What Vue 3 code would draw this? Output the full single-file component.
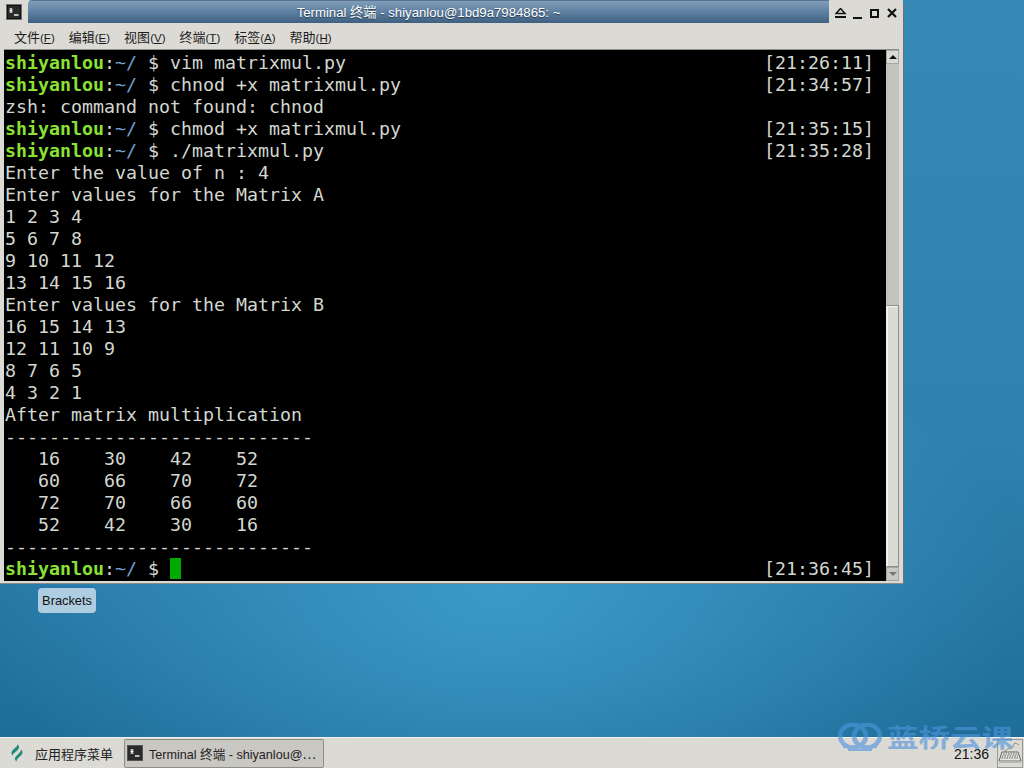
<script setup>
const prompt = { user: 'shiyanlou', sep: ':', path: '~/' }
const lines = [
  { p: true, t: 'vim matrixmul.py', time: '[21:26:11]' },
  { p: true, t: 'chnod +x matrixmul.py', time: '[21:34:57]' },
  { t: 'zsh: command not found: chnod' },
  { p: true, t: 'chmod +x matrixmul.py', time: '[21:35:15]' },
  { p: true, t: './matrixmul.py', time: '[21:35:28]' },
  { t: 'Enter the value of n : 4' },
  { t: 'Enter values for the Matrix A' },
  { t: '1 2 3 4' },
  { t: '5 6 7 8' },
  { t: '9 10 11 12' },
  { t: '13 14 15 16' },
  { t: 'Enter values for the Matrix B' },
  { t: '16 15 14 13' },
  { t: '12 11 10 9' },
  { t: '8 7 6 5' },
  { t: '4 3 2 1' },
  { t: 'After matrix multiplication' },
  { t: '----------------------------' },
  { t: '   16    30    42    52' },
  { t: '   60    66    70    72' },
  { t: '   72    70    66    60' },
  { t: '   52    42    30    16' },
  { t: '----------------------------' },
  { p: true, t: '', cursor: true, time: '[21:36:45]' }
]
const menus = [
  ['文件', '(', 'F', ')'], ['编辑', '(', 'E', ')'], ['视图', '(', 'V', ')'],
  ['终端', '(', 'T', ')'], ['标签', '(', 'A', ')'], ['帮助', '(', 'H', ')']
]
</script>

<template>
  <div class="screen">
    <div class="desktop">
      <section class="window">
        <header class="titlebar">
          <div class="app-icon">
            <svg width="16" height="16" viewBox="0 0 16 16">
              <rect x="0.500" y="0.500" width="15" height="15" fill="#2a2a2a" stroke="#6f6f6c" />
              <rect x="1.500" y="1.500" width="13" height="13" fill="none" stroke="#111" />
              <path d="M3.500 5h3M3.500 6.500h3M3.500 8h3M5 4v5" stroke="#f2f2f2" fill="none" />
              <path d="M8 11h4.500" stroke="#f2f2f2" stroke-width="1.500" />
            </svg>
          </div>
          <div class="titlefill">
            <span class="title">Terminal 终端 - shiyanlou@1bd9a7984865: ~</span>
          </div>
          <div class="controls">
            <svg width="64" height="14" viewBox="0 0 64 14">
              <path d="M5.500 0.500l4.500 5H1z" fill="none" stroke="#111" stroke-width="1.500" />
              <path d="M0 9h11" stroke="#111" stroke-width="2" />
              <path d="M18 10h9" stroke="#111" stroke-width="2" />
              <rect x="36" y="2" width="7" height="7" fill="none" stroke="#111" stroke-width="2" />
              <path d="M53 1l8 8M61 1l-8 8" stroke="#111" stroke-width="2.200" />
            </svg>
          </div>
        </header>
        <nav class="menubar">
          <span v-for="m in menus" :key="m[2]" class="menu"><span class="cjk">{{ m[0] }}</span>{{ m[1] }}<u>{{ m[2] }}</u>{{ m[3] }}</span>
        </nav>
        <div class="term-wrap">
          <div class="terminal">
            <div v-for="(l, i) in lines" :key="i" class="line">
              <span class="cmd"><template v-if="l.p"><b class="user">{{ prompt.user }}</b><span>{{ prompt.sep }}</span><span class="path">{{ prompt.path }}</span><span> $ </span></template>{{ l.t }}<span v-if="l.cursor" class="cursor"></span></span>
              <span v-if="l.time">{{ l.time }}</span>
            </div>
          </div>
          <div class="scrollbar">
            <div class="arrow"><i class="up"></i></div>
            <div class="track">
              <div class="thumb"></div>
            </div>
            <div class="arrow"><i class="down"></i></div>
          </div>
        </div>
      </section>
      <div class="tooltip">Brackets</div>
    </div>
    <footer class="taskbar">
      <div class="start">
        <svg width="14" height="18" viewBox="0 0 14 18">
          <path d="M7.500 0.500C7.500 3 2 5.500 1.500 8.500c-.2 1.500.5 2.500 1 3C3 9 8.500 6.500 9 3.500c.2-1.200-.6-2.300-1.500-3z" fill="#1f8a7a" />
          <path d="M11 5.500c.9.8 1.700 2 1.500 3.300C12 12 6.500 14 6.500 17.500c-1-.7-1.800-1.800-1.500-3.200C5.500 11.500 11 9 11 5.500z" fill="#1f8a7a" />
        </svg>
        <span>应用程序菜单</span>
      </div>
      <div class="task">
        <svg width="16" height="16" viewBox="0 0 16 16">
          <rect x="0.500" y="0.500" width="15" height="15" fill="#2a2a2a" stroke="#555" />
          <path d="M3.500 5h3M3.500 6.500h3M3.500 8h3M5 4v5" stroke="#f2f2f2" fill="none" />
          <path d="M8 11h4.500" stroke="#f2f2f2" stroke-width="1.500" />
        </svg>
        <span>Terminal 终端 - shiyanlou@⋯</span>
      </div>
      <div class="spacer"></div>
      <div class="clock">21:36</div>
      <div class="tray">
        <svg width="24" height="26" viewBox="0 0 24 26">
          <path d="M7 12c1-4 5-3 7-4 2-1 1-4 3-5 2 0 3 2 4 2" fill="none" stroke="#888" />
          <path d="M4 12h16l3 9H1z" fill="#e8e8e4" stroke="#666" />
          <path d="M5 14h14M4 16h16M3.500 18h17" stroke="#555" stroke-dasharray="1.500 1" />
          <rect x="1" y="21" width="22" height="2" fill="#b5b5b0" />
        </svg>
      </div>
    </footer>
    <div class="watermark">
      <svg width="44" height="30" viewBox="0 0 44 30">
        <ellipse cx="15" cy="13" rx="13" ry="11.500" fill="none" stroke="#4f94dc" stroke-width="4.500" />
        <ellipse cx="29" cy="13" rx="13" ry="11.500" fill="none" stroke="#4f94dc" stroke-width="4.500" />
        <path d="M5 24h34M10 27h24" stroke="#4f94dc" stroke-width="2" />
      </svg>
      <span class="mark-text">蓝桥云课</span>
    </div>
  </div>
</template>

<style>
html, body { margin: 0; padding: 0; }
</style>

<style scoped>
.screen {
  width: 1024px;
  height: 768px;
  position: relative;
  overflow: hidden;
  display: flex;
  flex-direction: column;
  font-family: "Liberation Sans", "Noto Sans CJK SC", sans-serif;
}
.desktop {
  flex: 1;
  position: relative;
  background:
    radial-gradient(ellipse 520px 300px at 500px 590px, #3c9ac8 0%, rgba(60,154,200,0) 100%),
    linear-gradient(180deg, #3589b5 0%, #2f82ae 60%, #1f6e99 100%);
}
.window {
  position: absolute;
  left: 0;
  top: 0;
  width: 904px;
  height: 584px;
  box-sizing: border-box;
  background: #dcdad5;
  border-right: 1px solid #6f6f6c;
  border-bottom: 1px solid #8a8a86;
  border-top-right-radius: 5px;
  display: flex;
  flex-direction: column;
}
.titlebar {
  height: 23px;
  flex: none;
  display: flex;
  align-items: stretch;
  position: relative;
  background: #dcdad5;
  box-sizing: border-box;
}
.app-icon {
  width: 28px;
  flex: none;
  box-sizing: border-box;
  padding-top: 4px;
  padding-left: 6px;
}
.titlefill {
  flex: 1;
  display: flex;
  align-items: center;
  justify-content: center;
  background: linear-gradient(180deg, #3f5a76 0%, #7f9db9 6%, #5f81a2 50%, #3f6080 100%);
  border-top-left-radius: 4px;
}
.title {
  color: #fff;
  font-size: 13.200px;
  position: relative;
  text-shadow: 0 1px 1px #24384d;
}
.controls {
  width: 74px;
  flex: none;
  box-sizing: border-box;
  padding: 8px 0 0 6px;
}
.controls svg { display: block; }
.menubar {
  height: 27px;
  flex: none;
  display: flex;
  align-items: center;
  gap: 14px;
  padding-left: 14px;
  font-size: 11.500px;
  color: #1c1c1c;
  box-sizing: border-box;
  padding-bottom: 1px;
}
.cjk { font-size: 13px; }
.menu u { text-underline-offset: 1px; }
.term-wrap {
  flex: 1;
  min-height: 0;
  display: flex;
  margin: 0 4px 2px 4px;
  box-shadow: 0 -1px 0 #8c8a85;
}
.terminal {
  width: 882px;
  flex: none;
  background: #000;
  color: #d3d7cf;
  font-family: "DejaVu Sans Mono", monospace;
  font-size: 18.270px;
  line-height: 22px;
  box-sizing: border-box;
  padding: 2px 12px 0 1px;
}
.line {
  display: flex;
  justify-content: space-between;
  height: 22px;
  white-space: pre;
}
.user { color: #8ae234; font-weight: 700; }
.path { color: #729fcf; }
.cursor {
  display: inline-block;
  width: 11px;
  height: 21px;
  background: #00aa00;
  vertical-align: -4px;
}
.scrollbar {
  width: 13px;
  flex: none;
  display: flex;
  flex-direction: column;
  background: #c4c2bc;
}
.arrow {
  height: 14px;
  flex: none;
  box-sizing: border-box;
  border: 1px solid #a8a6a0;
  background: #dcdad5;
  display: flex;
  align-items: center;
  justify-content: center;
}
.arrow i {
  width: 0;
  height: 0;
  border-left: 4px solid transparent;
  border-right: 4px solid transparent;
}
.up { border-bottom: 4px solid #111; }
.down { border-top: 4px solid #777; }
.arrow:last-child { background: #c9c7c1; }
.track {
  flex: 1;
  display: flex;
  flex-direction: column;
  justify-content: flex-end;
  padding-top: 241px;
}
.thumb {
  flex: 1;
  box-sizing: border-box;
  border: 1px solid #8f8d87;
  border-left-color: #f1f0ed;
  background: #dcdad5;
  box-shadow: inset 1px 1px 0 #f4f3f0;
}
.tooltip {
  position: absolute;
  left: 38px;
  top: 588px;
  width: 58px;
  height: 25px;
  box-sizing: border-box;
  border-radius: 4px;
  background: #aecde0;
  color: #111;
  font-size: 12.800px;
  line-height: 26px;
  text-align: center;
  box-shadow: 0 -3px 3px -2px #2a6cb0;
}
.taskbar {
  height: 31px;
  flex: none;
  display: flex;
  align-items: center;
  background: #dcdad5;
  border-top: 1px solid #f2f1ee;
  box-sizing: border-box;
  font-size: 13px;
  color: #222;
}
.start {
  display: flex;
  align-items: center;
  gap: 11px;
  padding-left: 10px;
  width: 124px;
  box-sizing: border-box;
  flex: none;
  white-space: nowrap;
}
.task {
  width: 200px;
  height: 29px;
  flex: none;
  box-sizing: border-box;
  display: flex;
  align-items: center;
  gap: 6px;
  padding-left: 2px;
  background: #c9c7c2;
  border: 1px solid #8e8c87;
  border-radius: 2px;
  font-size: 12.600px;
  white-space: nowrap;
  overflow: hidden;
}
.spacer { flex: 1; }
.clock {
  font-size: 14px;
  color: #111;
  width: 43px;
  padding-top: 1px;
}
.tray {
  width: 26px;
  height: 29px;
  flex: none;
  margin-right: 1px;
  box-sizing: border-box;
  border: 1px solid #9a9893;
  display: flex;
  align-items: center;
  justify-content: center;
}
.watermark {
  position: absolute;
  left: 838px;
  top: 723px;
  height: 24px;
  display: flex;
  align-items: flex-start;
  gap: 5px;
  color: #4f94dc;
  opacity: 0.62;
  pointer-events: none;
}
.mark-text {
  font-size: 31.500px;
  font-weight: 700;
  line-height: 24px;
  margin-top: 3px;
  white-space: nowrap;
  transform: scaleY(0.8);
}
</style>
